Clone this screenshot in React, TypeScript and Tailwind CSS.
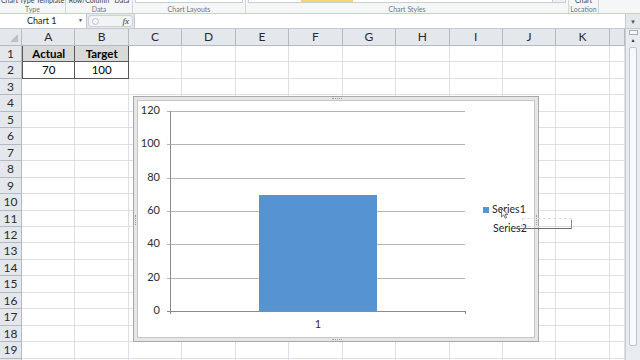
import type { ReactNode } from "react";

const COLS = ["A", "B", "C", "D", "E", "F", "G", "H", "I", "J", "K", ""];

// Row heights alternate so the sheet keeps Excel's 16.45px pitch
const ROW_H = [
  "h-[16px]", "h-[17px]", "h-[16px]", "h-[17px]", "h-[16px]",
  "h-[17px]", "h-[16px]", "h-[17px]", "h-[16px]", "h-[17px]",
  "h-[16px]", "h-[16px]", "h-[17px]", "h-[16px]", "h-[17px]",
  "h-[16px]", "h-[17px]", "h-[16px]", "h-[17px]", "h-[16px]",
];

const cells: Record<string, { text: string; bold?: boolean }> = {
  A1: { text: "Actual", bold: true },
  B1: { text: "Target", bold: true },
  A2: { text: "70" },
  B2: { text: "100" },
};

const TICKS = [0, 20, 40, 60, 80, 100, 120];
const toY = (v: number) => Math.round(210 - (v * 200) / 120) + 0.5;

const rowGrid = "grid grid-cols-[22px_repeat(11,53.45px)_1fr]";

function Group({
  width,
  label,
  children,
}: {
  width: number;
  label: string;
  children?: ReactNode;
}) {
  return (
    <div
      className="flex shrink-0 flex-col border-r border-[#d2d6db]"
      style={{ width }}
    >
      <div className="h-[5px] overflow-hidden">{children}</div>
      <div className="text-center text-[7px] leading-[8px] text-[#73777c]">
        {label}
      </div>
    </div>
  );
}

function Ribbon() {
  return (
    <div className="flex h-[14px] shrink-0 border-b border-[#c3d5bd] bg-[#f4f6f8]">
      <Group width={66} label="Type">
        <div className="-mt-[4px] flex justify-around text-[7px] leading-[9px] text-[#3d3d3d]">
          <span>Chart Type</span>
          <span>Template</span>
        </div>
      </Group>
      <Group width={67} label="Data">
        <div className="-mt-[4px] flex justify-around text-[7px] leading-[9px] text-[#3d3d3d]">
          <span>Row/Column</span>
          <span>Data</span>
        </div>
      </Group>
      <Group width={113} label="Chart Layouts">
        <div className="mx-[2px] h-[3px] border-x border-b border-[#c9ced4] bg-white" />
      </Group>
      <Group width={323} label="Chart Styles">
        <div className="mx-[2px] flex h-[3px] border-x border-b border-[#c9ced4] bg-white">
          <span className="ml-[52px] w-[52px] bg-[#f8d46c]" />
          <span className="flex-1" />
          <span className="w-[13px] border-l border-[#c9ced4] bg-[#eef1f4]" />
        </div>
      </Group>
      <Group width={30} label="Location">
        <div className="-mt-[4px] text-center text-[7px] leading-[9px] text-[#3d3d3d]">
          Chart
        </div>
      </Group>
      <div className="flex-1" />
    </div>
  );
}

function FormulaBar() {
  return (
    <div className="flex h-[15px] shrink-0 border-b border-[#c5cad0] bg-[#e4e8ed]">
      <div className="flex w-[87px] items-center border-r border-[#c5cad0] bg-white">
        <span className="ml-[27px] flex-1 text-[9px] text-[#222]">Chart 1</span>
        <span className="mr-[3px] text-[5px] text-[#444]">▼</span>
      </div>
      <div className="mx-[1px] my-[1px] flex w-[45px] items-center justify-between rounded-[3px] border border-[#cdd2d8] bg-[#f1f3f5] px-[3px]">
        <span className="h-[7px] w-[7px] rounded-full border border-[#c2c6cb]" />
        <span className="font-['Liberation_Serif',serif] text-[9px] italic leading-none text-[#333]">
          fx
        </span>
      </div>
      <div className="flex-1 border-x border-[#c5cad0] bg-white" />
      <div className="flex w-[14px] items-center justify-center text-[6px] text-[#555]">
        ▼
      </div>
    </div>
  );
}

function Legend() {
  return (
    <div className="relative flex-1 pl-[5px] pt-[99px] text-[10.5px] leading-[19px] text-[#262626]">
      <div className="flex items-center gap-[3px]">
        <span className="h-[6px] w-[6px] bg-[#5593d3]" />
        <span>Series1</span>
      </div>
      <div className="pl-[10px]">Series2</div>

      <div className="absolute left-[44px] top-[117px] h-[9px] w-[50px] border border-dashed border-[#dcdcdc]" />
      <div className="absolute left-[38px] top-[127px] h-px w-[56px] bg-[#6f6f6f]" />
      <div className="absolute left-[93px] top-[119px] h-[9px] w-px bg-[#8c8c8c]" />

      <svg
        className="absolute left-[23px] top-[107px]"
        width="8"
        height="11"
        viewBox="0 0 8 11"
      >
        <path
          d="M0.5 0.5 L0.5 9 L2.7 7 L4.2 10.3 L5.6 9.6 L4.2 6.5 L7 6.5 Z"
          fill="#f4f4f4"
          stroke="#555"
          strokeWidth="0.8"
        />
      </svg>
    </div>
  );
}

function Chart() {
  return (
    <div className="absolute left-[133px] top-[67px] h-[246px] w-[406px] border border-[#a9a9a9] bg-[#e6e6e6] p-[3px]">
      <span className="absolute left-[198px] -top-px h-[3px] w-[10px] border-y border-dotted border-[#9c9c9c]" />
      <span className="absolute left-[198px] -bottom-px h-[3px] w-[10px] border-y border-dotted border-[#9c9c9c]" />
      <span className="absolute -left-px top-[118px] h-[10px] w-[3px] border-x border-dotted border-[#9c9c9c]" />
      <span className="absolute -right-px top-[118px] h-[10px] w-[3px] border-x border-dotted border-[#9c9c9c]" />

      <div className="flex h-full border border-[#c6c6c6] bg-white">
        <svg
          width="340"
          height="236"
          className="shrink-0 font-['Lato',sans-serif]"
        >
          {TICKS.map((t) => (
            <line
              key={t}
              x1={29}
              x2={327}
              y1={toY(t)}
              y2={toY(t)}
              stroke={t === 0 ? "#8a8a8a" : "#b5b5b5"}
            />
          ))}
          <line x1={32.5} x2={32.5} y1={10} y2={213} stroke="#8a8a8a" />
          <line x1={327.5} x2={327.5} y1={210} y2={213} stroke="#8a8a8a" />
          <rect x={121} y={94} width={118} height={116} fill="#5593d3" />
          {TICKS.map((t) => (
            <text
              key={t}
              x={22}
              y={toY(t)}
              textAnchor="end"
              dominantBaseline="middle"
              fontSize="11"
              fill="#2e2e2e"
            >
              {t}
            </text>
          ))}
          <text
            x={180}
            y={224}
            textAnchor="middle"
            dominantBaseline="middle"
            fontSize="11"
            fill="#2e2e2e"
          >
            1
          </text>
        </svg>
        <Legend />
      </div>
    </div>
  );
}

function Sheet() {
  return (
    <div className="relative flex-1 overflow-hidden text-[#2b2b2b]">
      <div className={`${rowGrid} h-[17px]`}>
        <div className="relative border-b border-r border-[#b4bac1] bg-[#e4e8ed]">
          <span className="absolute bottom-[3px] right-[3px] h-[8px] w-[8px] bg-[#bcc2c9] [clip-path:polygon(100%_0,100%_100%,0_100%)]" />
        </div>
        {COLS.map((c, i) => (
          <div
            key={`h${i}`}
            className="flex items-center justify-center border-b border-r border-[#b4bac1] bg-[#e4e8ed] text-[12px] leading-none"
          >
            {c}
          </div>
        ))}
      </div>

      {ROW_H.map((h, idx) => {
        const r = idx + 1;
        return (
          <div key={r} className={`${rowGrid} ${h}`}>
            <div className="flex items-center justify-center border-b border-r border-[#b4bac1] bg-[#e4e8ed] text-[12px] leading-none">
              {r}
            </div>
            {COLS.map((c, i) => {
              const cell = cells[`${c}${r}`];
              if (!cell) {
                return (
                  <div key={i} className="border-b border-r border-[#dcdfe3]" />
                );
              }
              return (
                <div
                  key={i}
                  className={`flex items-center justify-center border-b border-r border-[#595959] text-[11.5px] leading-none text-black ${
                    c === "A" ? "border-l" : ""
                  } ${cell.bold ? "bg-[#d9d9d9] font-bold" : ""}`}
                >
                  {cell.text}
                </div>
              );
            })}
          </div>
        );
      })}
      <Chart />
    </div>
  );
}

function ScrollBar() {
  return (
    <div className="flex w-[15px] shrink-0 flex-col items-center border-l border-[#c8cdd3] bg-[#e9edf1]">
      <span className="mt-px h-[5px] w-[9px] border border-[#a9b0b8] bg-[#f5f7f9]" />
      <div className="flex h-[12px] items-center justify-center text-[5px] text-[#333]">
        ▲
      </div>
      <span className="mb-[14px] w-[8px] flex-1 rounded-[2px] border border-[#bfc6ce] bg-[#f7f9fb]" />
    </div>
  );
}

export default function App() {
  return (
    <div className="flex h-[360px] w-[640px] flex-col overflow-hidden bg-white font-['Lato',sans-serif]">
      <Ribbon />
      <FormulaBar />
      <div className="flex min-h-0 flex-1">
        <Sheet />
        <ScrollBar />
      </div>
    </div>
  );
}
